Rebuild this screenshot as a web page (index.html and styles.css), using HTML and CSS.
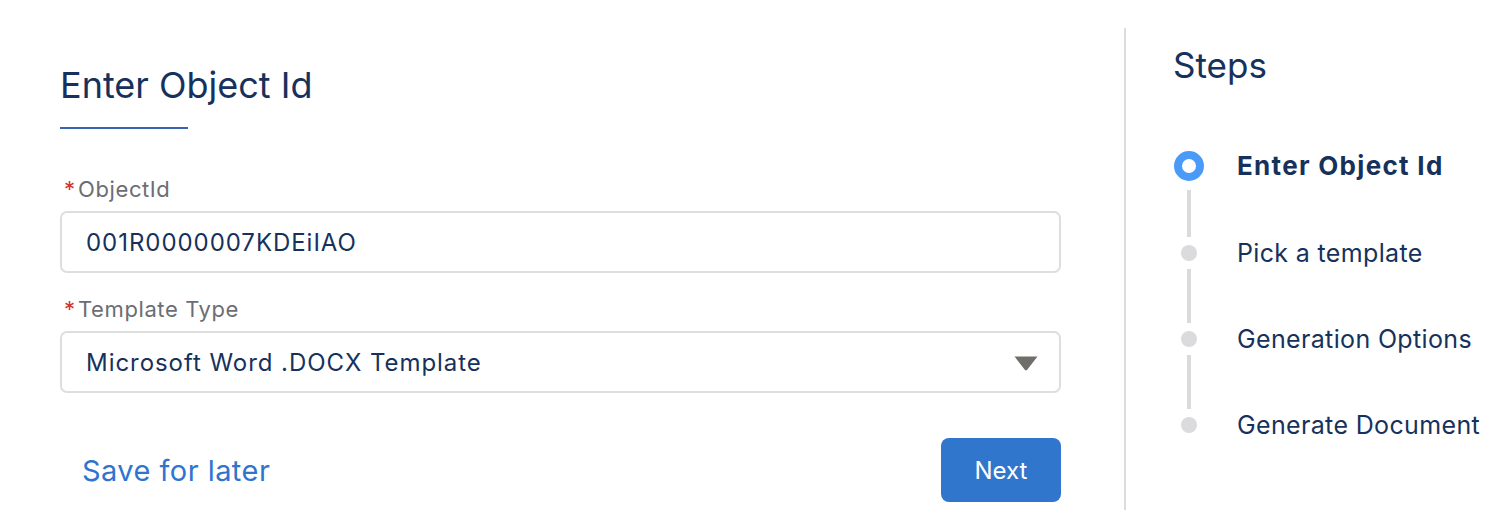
FILE: index.html
```html
<!DOCTYPE html>
<html lang="en">
<head>
<meta charset="utf-8">
<title>Enter Object Id</title>
<link rel="stylesheet" href="styles.css">
</head>
<body>
<div class="page">
  <main class="main">
    <div class="title-wrap">
      <h1 class="title">Enter Object Id</h1>
    </div>
    <div class="field">
      <label class="label"><span class="req">*</span>ObjectId</label>
      <div class="input">001R0000007KDEiIAO</div>
    </div>
    <div class="field field-2">
      <label class="label"><span class="req">*</span>Template Type</label>
      <div class="input select">
        <span>Microsoft Word .DOCX Template</span>
        <svg class="caret" width="24" height="15" viewBox="0 0 24 15"><path d="M0.5 0.5 H23.5 L13.2 13.8 Q12 15 10.8 13.8 Z" fill="#706e6b"/></svg>
      </div>
    </div>
    <div class="actions">
      <button class="link-btn">Save for later</button>
      <button class="primary-btn">Next</button>
    </div>
  </main>
  <div class="divider"></div>
  <aside class="side">
    <h2 class="side-title">Steps</h2>
    <ol class="steps">
      <li class="step step-active">
        <div class="marker"><span class="ring"></span></div>
        <div class="step-label">Enter Object Id</div>
        <div class="line line-first"></div>
      </li>
      <li class="step">
        <div class="marker"><span class="dot"></span></div>
        <div class="step-label">Pick a template</div>
        <div class="line"></div>
      </li>
      <li class="step">
        <div class="marker"><span class="dot"></span></div>
        <div class="step-label">Generation Options</div>
        <div class="line"></div>
      </li>
      <li class="step">
        <div class="marker"><span class="dot"></span></div>
        <div class="step-label">Generate Document</div>
      </li>
    </ol>
  </aside>
</div>
</body>
</html>
```

FILE: styles.css
```css
* { box-sizing: border-box; }
html, body { margin: 0; padding: 0; background: #ffffff; }
body {
  font-family: Inter, "Noto Sans", "Liberation Sans", sans-serif;
  color: #16325c;
  width: 1498px;
  height: 530px;
  overflow: hidden;
}
.page { display: flex; align-items: flex-start; }

.main { width: 1061px; padding-left: 60px; padding-top: 64px; }
.title-wrap {
  width: 128px;
  border-bottom: 2px solid #3a64b0;
  padding-bottom: 21px;
  white-space: nowrap;
}
.title {
  margin: 0;
  font-size: 36px;
  line-height: 42px;
  font-weight: 400;
  color: #16325c;
}

.field { margin-top: 48px; }
.field-2 { margin-top: 24px; }
.label {
  display: block;
  height: 24px;
  font-size: 22px;
  line-height: 24px;
  color: #6b6e73;
  padding-left: 4px;
  letter-spacing: 0.6px;
}
.req { color: #d4302f; margin-right: 3px; letter-spacing: 0; }
.input {
  margin-top: 10px;
  height: 62px;
  border: 2px solid #dedede;
  border-radius: 7px;
  padding: 0 24px;
  display: flex;
  align-items: center;
  font-size: 24px;
  letter-spacing: 0.95px;
  color: #16325c;
}
.select { justify-content: space-between; padding-right: 21px; }
.caret { display: block; margin-top: 2px; }

.actions {
  margin-top: 45px;
  display: flex;
  justify-content: space-between;
  align-items: center;
}
.link-btn {
  border: 0;
  background: none;
  padding: 0 0 0 22px;
  font-family: inherit;
  font-size: 29px;
  letter-spacing: 0.45px;
  color: #3074cf;
  cursor: pointer;
}
.primary-btn {
  width: 120px;
  height: 64px;
  border: 0;
  border-radius: 8px;
  background: #3076cd;
  color: #ffffff;
  font-family: inherit;
  font-size: 24px;
  cursor: pointer;
}

.divider {
  margin-left: 63px;
  margin-top: 28px;
  width: 2px;
  height: 482px;
  background: #dcdcdc;
}

.side { padding-left: 47px; padding-top: 44px; }
.side-title {
  margin: 0;
  font-size: 35px;
  line-height: 42px;
  font-weight: 400;
  color: #16325c;
}
.steps { list-style: none; margin: 64px 0 0; padding: 0; }
.step {
  display: grid;
  grid-template-columns: 32px auto;
  column-gap: 32px;
}
.marker {
  height: 32px;
  display: flex;
  align-items: center;
  justify-content: center;
}
.ring {
  width: 30px;
  height: 30px;
  border-radius: 50%;
  border: 8px solid #4a9bf7;
  background: #ffffff;
}
.dot {
  width: 16px;
  height: 16px;
  border-radius: 50%;
  background: #dbdbdd;
}
.step-label {
  font-size: 25px;
  line-height: 32px;
  letter-spacing: 0.35px;
  white-space: nowrap;
  color: #16325c;
}
.step-active .step-label { font-weight: 700; font-size: 26px; letter-spacing: 1.3px; }
.line {
  grid-column: 1;
  justify-self: center;
  width: 4px;
  height: 54px;
  background: #dcdbda;
}
.line-first { margin-top: 8px; height: 47px; }
```
